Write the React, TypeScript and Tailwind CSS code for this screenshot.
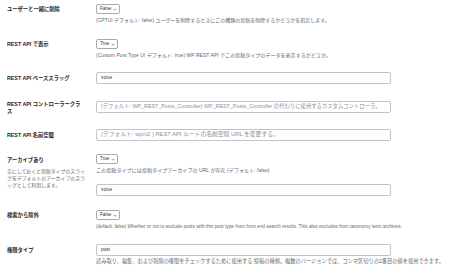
import React from "react";

const FONT = "font-['Liberation_Sans','Noto_Sans_CJK_JP',sans-serif]";

function Chevron() {
  return (
    <svg width="4" height="3" viewBox="0 0 8 5" className="shrink-0">
      <path d="M1 1 L4 4 L7 1" fill="none" stroke="#50575e" strokeWidth="1.2" />
    </svg>
  );
}

function Select({ value, w }: { value: string; w: string }) {
  return (
    <div
      className={`${w} h-[10px] border border-[#a7aaad] rounded-[2px] flex items-center justify-between pl-[3px] pr-[2px] text-[4.6px] leading-none text-[#2c3338] bg-white`}
    >
      <span>{value}</span>
      <Chevron />
    </div>
  );
}

function Input({ value, placeholder, size = "text-[5.4px]" }: { value?: string; placeholder?: string; size?: string }) {
  return (
    <div className="w-[295px] h-[12px] border border-[#c3c4c7] rounded-[2px] flex items-center px-[4px] bg-white overflow-hidden">
      {value ? (
        <span className="text-[4.8px] leading-none text-[#2c3338]">{value}</span>
      ) : (
        <span className={`${size} leading-none text-[#8c8f94] whitespace-nowrap`}>{placeholder}</span>
      )}
    </div>
  );
}

function Desc({ children, className = "" }: { children: React.ReactNode; className?: string }) {
  return (
    <div className={`leading-[7px] text-[#646970] whitespace-nowrap ${className}`}>{children}</div>
  );
}

function Label({ children, className = "" }: { children: React.ReactNode; className?: string }) {
  return (
    <div className={`text-[5.3px] leading-[7px] font-bold text-[#1d2327] whitespace-nowrap ${className}`}>{children}</div>
  );
}

export default function App() {
  return (
    <div className={`w-[474px] h-[272px] bg-white overflow-hidden ${FONT}`}>
      {/* Row 1 */}
      <div className="flex h-[35px]">
        <div className="w-[96px] pl-[7px] pt-[5.5px]">
          <Label>ユーザーと一緒に削除</Label>
        </div>
        <div className="pt-[4px]">
          <Select value="False" w="w-[24px]" />
          <Desc className="mt-[3px] text-[5px]">(CPTUI デフォルト: false) ユーザーを削除するときにこの種類の投稿を削除するかどうかを指定します。</Desc>
        </div>
      </div>
      {/* Row 2 */}
      <div className="flex h-[33px]">
        <div className="w-[96px] pl-[7px] pt-[5.5px]">
          <Label>REST API で表示</Label>
        </div>
        <div className="pt-[4px]">
          <Select value="True" w="w-[22px]" />
          <Desc className="mt-[3px] text-[5.05px]">(Custom Post Type UI デフォルト: true) WP REST API でこの投稿タイプのデータを表示するかどうか。</Desc>
        </div>
      </div>
      {/* Row 3 */}
      <div className="flex h-[29px]">
        <div className="w-[96px] pl-[7px] pt-[6.5px]">
          <Label>REST API ベーススラッグ</Label>
        </div>
        <div className="pt-[4px]">
          <Input value="voice" />
        </div>
      </div>
      {/* Row 4 */}
      <div className="flex h-[28px]">
        <div className="w-[96px] pl-[7px] pt-[3.5px]">
          <Label>
            REST API コントローラークラ
            <br />ス
          </Label>
        </div>
        <div className="pt-[4px]">
          <Input
            size="text-[5.35px]"
            placeholder="(デフォルト: WP_REST_Posts_Controller) WP_REST_Posts_Controller の代わりに使用するカスタムコントローラ。"
          />
        </div>
      </div>
      {/* Row 5 */}
      <div className="flex h-[25px]">
        <div className="w-[96px] pl-[7px] pt-[7px]">
          <Label>REST API 名前空間</Label>
        </div>
        <div className="pt-[4px]">
          <Input size="text-[5.8px]" placeholder="(デフォルト: wp/v2 ) REST API ルートの名前空間 URL を変更する。" />
        </div>
      </div>
      {/* Row 6 */}
      <div className="flex h-[56px]">
        <div className="w-[96px] pl-[7px] pt-[6.5px]">
          <Label>アーカイブあり</Label>
          <div className="mt-[4px] text-[4.9px] leading-[7px] text-[#646970] whitespace-nowrap">
            空にしておくと投稿タイプのスラッ
            <br />
            グをデフォルトのアーカイブのスラ
            <br />
            ッグとして利用します。
          </div>
        </div>
        <div className="pt-[4px]">
          <Select value="True" w="w-[22px]" />
          <Desc className="mt-[3px] text-[5.1px]">この投稿タイプには投稿タイプアーカイブの URL が存在 (デフォルト: false)</Desc>
          <div className="mt-[10px]">
            <Input value="voice" />
          </div>
        </div>
      </div>
      {/* Row 7 */}
      <div className="flex h-[34px]">
        <div className="w-[96px] pl-[7px] pt-[6px]">
          <Label>検索から除外</Label>
        </div>
        <div className="pt-[4px]">
          <Select value="False" w="w-[24px]" />
          <Desc className="mt-[3px] text-[4.78px]">(default: false) Whether or not to exclude posts with this post type from front end search results. This also excludes from taxonomy term archives.</Desc>
        </div>
      </div>
      {/* Row 8 */}
      <div className="flex h-[32px]">
        <div className="w-[96px] pl-[7px] pt-[6.5px]">
          <Label>権限タイプ</Label>
        </div>
        <div className="pt-[4px]">
          <Input value="post" />
          <Desc className="mt-[2px] text-[5.22px]">読み取り、編集、および削除の権限をチェックするために使用する 投稿の種類。複数のバージョンでは、コンマ区切りの2番目の値を使用できます。</Desc>
        </div>
      </div>
    </div>
  );
}
